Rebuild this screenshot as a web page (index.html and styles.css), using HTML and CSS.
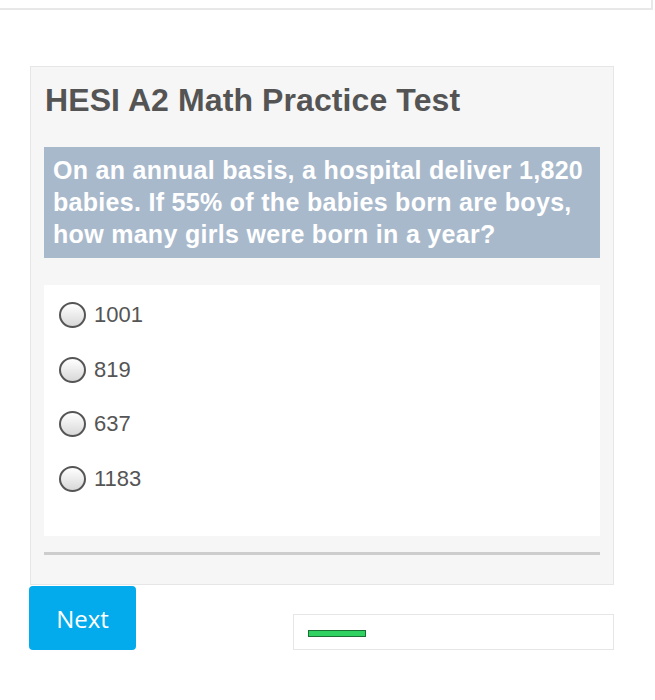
FILE: index.html
```html
<!DOCTYPE html>
<html>
<head>
<meta charset="utf-8">
<link rel="stylesheet" href="styles.css">
</head>
<body>
<div class="topbar"></div>
<div class="wrap">
  <div class="card">
    <h1 class="title">HESI A2 Math Practice Test</h1>
    <div class="question">On an annual basis, a hospital deliver 1,820 babies. If 55% of the babies born are boys, how many girls were born in a year?</div>
    <div class="options">
      <label class="opt"><span class="radio"></span><span class="opt-text">1001</span></label>
      <label class="opt"><span class="radio"></span><span class="opt-text">819</span></label>
      <label class="opt"><span class="radio"></span><span class="opt-text">637</span></label>
      <label class="opt"><span class="radio"></span><span class="opt-text">1183</span></label>
    </div>
    <div class="sep"></div>
  </div>
  <div class="bottom">
    <button class="next">Next</button>
    <div class="progress"><div class="bar"></div></div>
  </div>
</div>
</body>
</html>
```
FILE: styles.css
```css
html, body {
  margin: 0;
  padding: 0;
  background: #ffffff;
  font-family: "Liberation Sans", Arial, sans-serif;
}
.topbar {
  width: 651px;
  height: 8px;
  border-bottom: 2px solid #e8e8e8;
  border-right: 2px solid #e8e8e8;
}
.wrap {
  width: 585px;
  padding-left: 29px;
  margin-top: 56px;
  padding-bottom: 20px;
}
.card {
  box-sizing: border-box;
  width: 584px;
  margin-left: 1px;
  background: #f6f6f6;
  border: 1px solid #e6e6e6;
  padding: 14px 13px 29px 13px;
}
.title {
  margin: 0 0 28px 0;
  font-size: 32px;
  line-height: 38px;
  font-weight: bold;
  color: #545454;
  letter-spacing: 0.1px;
  padding-left: 1px;
}
.question {
  background: #a9b9cc;
  color: #ffffff;
  font-weight: bold;
  font-size: 25px;
  line-height: 32px;
  letter-spacing: 0.3px;
  padding: 7px 9px 8px 9px;
}
.options {
  margin-top: 27px;
  background: #ffffff;
  padding: 3px 15px 30px 15px;
}
.opt {
  display: flex;
  align-items: center;
  height: 54.5px;
}
.radio {
  box-sizing: border-box;
  width: 27px;
  height: 26px;
  border: 2px solid #555555;
  border-radius: 50%;
  background: linear-gradient(#ffffff, #d8d8d8);
  flex: none;
}
.opt-text {
  margin-left: 8px;
  font-size: 22px;
  color: #555555;
}
.sep {
  margin-top: 16px;
  height: 3px;
  background: #cdcdcd;
}
.bottom {
  display: flex;
  justify-content: space-between;
  align-items: flex-end;
  margin-top: 1px;
}
.next {
  width: 107px;
  height: 64px;
  border: none;
  border-radius: 4px;
  background: #03abec;
  color: #ffffff;
  font-family: "Open Sans", sans-serif;
  font-size: 24px;
  padding: 0;
}
.progress {
  box-sizing: border-box;
  width: 321px;
  height: 36px;
  border: 1px solid #e6e6e6;
  background: #ffffff;
  padding: 15px 0 0 14px;
}
.bar {
  box-sizing: border-box;
  width: 58px;
  height: 7px;
  background: #2fd160;
  border: 1.5px solid #1b6e34;
}
```
